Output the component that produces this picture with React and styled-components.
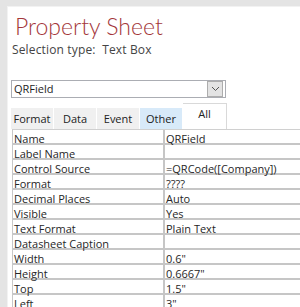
import React from "react";
import styled, { createGlobalStyle } from "styled-components";

const Global = createGlobalStyle`
  html, body { margin: 0; padding: 0; background: #e4e4e4; }
  body { font-family: "Open Sans", "Noto Sans", sans-serif; overflow: hidden; }
`;

const Frame = styled.div`
  width: 300px;
  height: 307px;
  box-sizing: border-box;
  padding: 6px 0 0 7px;
  background: #e4e4e4;
  overflow: hidden;
`;

const Panel = styled.div`
  background: #ffffff;
  height: 301px;
  border-left: 1px solid #f2f2f2;
  border-top: 1px solid #f2f2f2;
  box-sizing: border-box;
  display: flex;
  flex-direction: column;
  overflow: hidden;
`;

const Title = styled.div`
  font-family: "Lato", "Open Sans", sans-serif;
  font-size: 23px;
  font-weight: 300;
  color: #a4373a;
  line-height: 28px;
  margin: 5px 0 0 7px;
`;

const Selection = styled.div`
  font-size: 12px;
  color: #444444;
  line-height: 16px;
  margin: 2px 0 0 4px;
  letter-spacing: 0.15px;
  white-space: pre;
`;

const Combo = styled.div`
  margin: 22px 0 0 3px;
  width: 215px;
  height: 22px;
  box-sizing: border-box;
  border: 1px solid #abadb3;
  display: flex;
  align-items: center;
  justify-content: space-between;
  padding: 0 2px 0 2px;
`;

const ComboText = styled.span`
  font-size: 11px;
  color: #1e1e1e;
  line-height: 16px;
`;

const ComboButton = styled.div`
  width: 16px;
  height: 16px;
  box-sizing: border-box;
  background: #e3e3e3;
  border: 1px solid #adadad;
  display: flex;
  align-items: center;
  justify-content: center;
`;

const Tabs = styled.div`
  display: flex;
  align-items: flex-end;
  margin: 5px 0 0 3px;
  height: 26px;
`;

const Tab = styled.div`
  width: ${(p) => p.$w}px;
  height: ${(p) => (p.$active ? 26 : 21)}px;
  box-sizing: border-box;
  display: flex;
  align-items: center;
  justify-content: center;
  font-size: 11px;
  color: #222222;
  background: ${(p) => (p.$active ? "#ffffff" : p.$hover ? "#d8eaf9" : "#f0f0f0")};
  border-right: 1px solid ${(p) => (p.$active ? "#d9d9d9" : "#ffffff")};
  border-top: ${(p) => (p.$active ? "1px solid #d9d9d9" : "none")};
  padding-bottom: ${(p) => (p.$active ? 6 : 0)}px;
`;

const Table = styled.div`
  margin: 0 0 0 4px;
  border-top: 1px solid #d0d0d0;
  border-left: 1px solid #c8c8c8;
`;

const Row = styled.div`
  display: grid;
  grid-template-columns: 152px 1fr;
  height: 15px;
  box-sizing: border-box;
  border-bottom: 2px solid #c6c6c6;
`;

const Cell = styled.div`
  font-size: 11px;
  line-height: 13px;
  height: 13px;
  box-sizing: border-box;
  padding-top: 2px;
  color: #262626;
  padding-left: 1px;
  white-space: nowrap;
  border-right: ${(p) => (p.$value ? "none" : "2px solid #c6c6c6")};
`;

const rows = [
  ["Name", "QRField"],
  ["Label Name", ""],
  ["Control Source", "=QRCode([Company])"],
  ["Format", "????"],
  ["Decimal Places", "Auto"],
  ["Visible", "Yes"],
  ["Text Format", "Plain Text"],
  ["Datasheet Caption", ""],
  ["Width", "0.6\""],
  ["Height", "0.6667\""],
  ["Top", "1.5\""],
  ["Left", "3\""],
];

const tabs = [
  { label: "Format", w: 43 },
  { label: "Data", w: 43 },
  { label: "Event", w: 43 },
  { label: "Other", w: 43, hover: true },
  { label: "All", w: 44, active: true },
];

export default function App() {
  return (
    <>
      <Global />
      <Frame>
        <Panel>
          <Title>Property Sheet</Title>
          <Selection>Selection type:  Text Box</Selection>
          <Combo>
            <ComboText>QRField</ComboText>
            <ComboButton>
              <svg width="9" height="6" viewBox="0 0 9 6">
                <path d="M1 1 L4.5 4.5 L8 1" fill="none" stroke="#555" strokeWidth="1" />
              </svg>
            </ComboButton>
          </Combo>
          <Tabs>
            {tabs.map((t) => (
              <Tab key={t.label} $w={t.w} $active={t.active} $hover={t.hover}>
                {t.label}
              </Tab>
            ))}
          </Tabs>
          <Table>
            {rows.map(([k, v]) => (
              <Row key={k}>
                <Cell>{k}</Cell>
                <Cell $value>{v}</Cell>
              </Row>
            ))}
          </Table>
        </Panel>
      </Frame>
    </>
  );
}
